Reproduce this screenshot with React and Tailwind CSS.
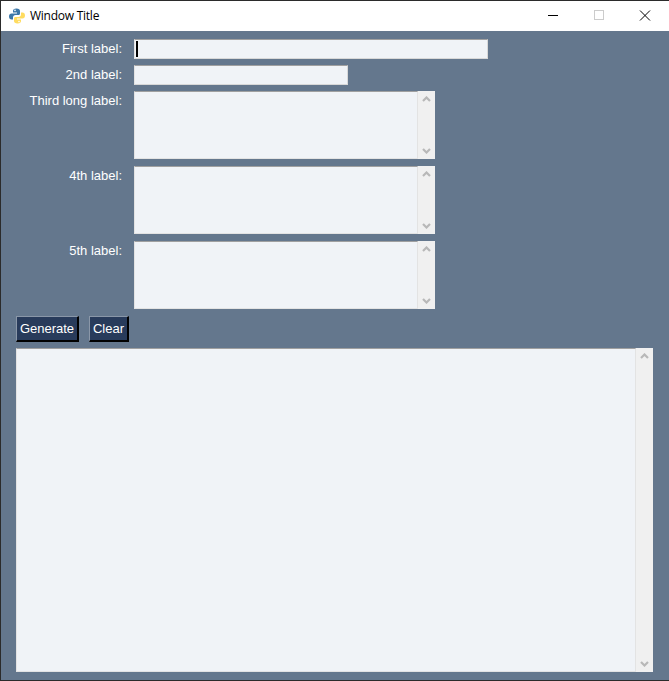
import React from 'react';

function ScrollBar() {
    return (
        <div className="w-[17px] bg-[#f0f0f0] flex flex-col justify-between items-center py-[5px] shrink-0">
            <svg width="9" height="6" viewBox="0 0 9 6" fill="none" stroke="#b8b8b8" strokeWidth="2.2">
                <path d="M1 5 L4.5 1.5 L8 5" />
            </svg>
            <svg width="9" height="6" viewBox="0 0 9 6" fill="none" stroke="#b8b8b8" strokeWidth="2.2">
                <path d="M1 1 L4.5 4.5 L8 1" />
            </svg>
        </div>
    );
}

function TextArea({ className }) {
    return (
        <div className={`flex ${className}`}>
            <div className="flex-1 bg-[#f0f3f7] border border-[#a0a0a0] border-r-[#e3e3e3] border-b-[#e3e3e3] border-l-[#e3e3e3]" />
            <ScrollBar />
        </div>
    );
}

function Label({ children, className = '' }) {
    return (
        <div className={`w-[121px] shrink-0 text-right text-white text-[13px] leading-[20px] ${className}`}>
            {children}
        </div>
    );
}

function AreaRow({ label, className = '' }) {
    return (
        <div className={`flex ${className}`}>
            <Label>{label}</Label>
            <TextArea className="ml-[12px] w-[301px] h-[68px]" />
        </div>
    );
}

export default function App() {
    return (
        <div className="w-[669px] h-[681px] bg-[#64778d] border-t border-l border-b border-[#2b2b2b] flex flex-col font-['Liberation_Sans',Arial,sans-serif] overflow-hidden">
            {/* title bar */}
            <div className="h-[30px] bg-white flex items-center shrink-0">
                <svg className="ml-[8px] mr-[5px]" width="16" height="16" viewBox="0 0 16 16">
                    <path d="M7.5 0.5 C5 0.5 4 1.5 4 3 V4.5 H8 V5.5 H2.5 C1 5.5 0 6.8 0 8.5 C0 10.2 1 11.5 2.5 11.5 H4 V9.5 C4 8 5 7 6.5 7 H9.5 C10.5 7 11 6.3 11 5.5 V3 C11 1.5 9.8 0.5 7.5 0.5 Z" fill="#3b77a8" />
                    <path d="M8.5 15.5 C11 15.5 12 14.5 12 13 V11.5 H8 V10.5 H13.5 C15 10.5 16 9.2 16 7.5 C16 5.8 15 4.5 13.5 4.5 H12 V6.5 C12 8 11 9 9.5 9 H6.5 C5.5 9 5 9.7 5 10.5 V13 C5 14.5 6.2 15.5 8.5 15.5 Z" fill="#ffdc60" />
                    <circle cx="6" cy="2.4" r="0.8" fill="#fff" />
                    <circle cx="10" cy="13.6" r="0.8" fill="#fff" />
                </svg>
                <span className="text-[12px] text-black font-['Open_Sans',sans-serif] tracking-[-0.25px]">Window Title</span>
                <div className="ml-auto flex items-center">
                    <svg width="46" height="30" viewBox="0 0 46 30">
                        <path d="M0 14.5 H10" transform="translate(18 0)" stroke="#000" strokeWidth="1" />
                    </svg>
                    <svg width="46" height="30" viewBox="0 0 46 30">
                        <rect x="18.5" y="9.5" width="9" height="9" fill="none" stroke="#cccccc" strokeWidth="1" />
                    </svg>
                    <svg width="46" height="30" viewBox="0 0 46 30" className="mr-[1px]">
                        <path d="M18 9.5 L28 19.5 M28 9.5 L18 19.5" stroke="#000" strokeWidth="1" />
                    </svg>
                </div>
            </div>

            {/* form */}
            <div className="flex flex-col flex-1 pt-[8px]">
                <div className="flex items-center">
                    <Label>First label:</Label>
                    <div className="ml-[12px] w-[354px] h-[20px] bg-[#f0f3f7] border border-[#a0a0a0] border-r-[#d8d8d8] border-b-[#d8d8d8] border-l-[#e3e3e3] flex items-center">
                        <div className="ml-[1px] w-[2px] h-[16px] bg-black" />
                    </div>
                </div>
                <div className="flex items-center mt-[6px]">
                    <Label>2nd label:</Label>
                    <div className="ml-[12px] w-[214px] h-[20px] bg-[#f0f3f7] border border-[#a0a0a0] border-r-[#d8d8d8] border-b-[#d8d8d8] border-l-[#e3e3e3]" />
                </div>
                <AreaRow label="Third long label:" className="mt-[6px]" />
                <AreaRow label="4th label:" className="mt-[7px]" />
                <AreaRow label="5th label:" className="mt-[7px]" />

                <div className="flex ml-[15px] mt-[7px] gap-[10px]">
                    <button className="w-[63px] h-[26px] bg-[#283b5b] text-white text-[13px] border border-[#8a97a8] border-r-black border-b-black border-r-2 border-b-2">Generate</button>
                    <button className="w-[40px] h-[26px] bg-[#283b5b] text-white text-[13px] border border-[#8a97a8] border-r-black border-b-black border-r-2 border-b-2">Clear</button>
                </div>

                <TextArea className="ml-[15px] mt-[6px] w-[637px] h-[324px]" />
            </div>
        </div>
    );
}
